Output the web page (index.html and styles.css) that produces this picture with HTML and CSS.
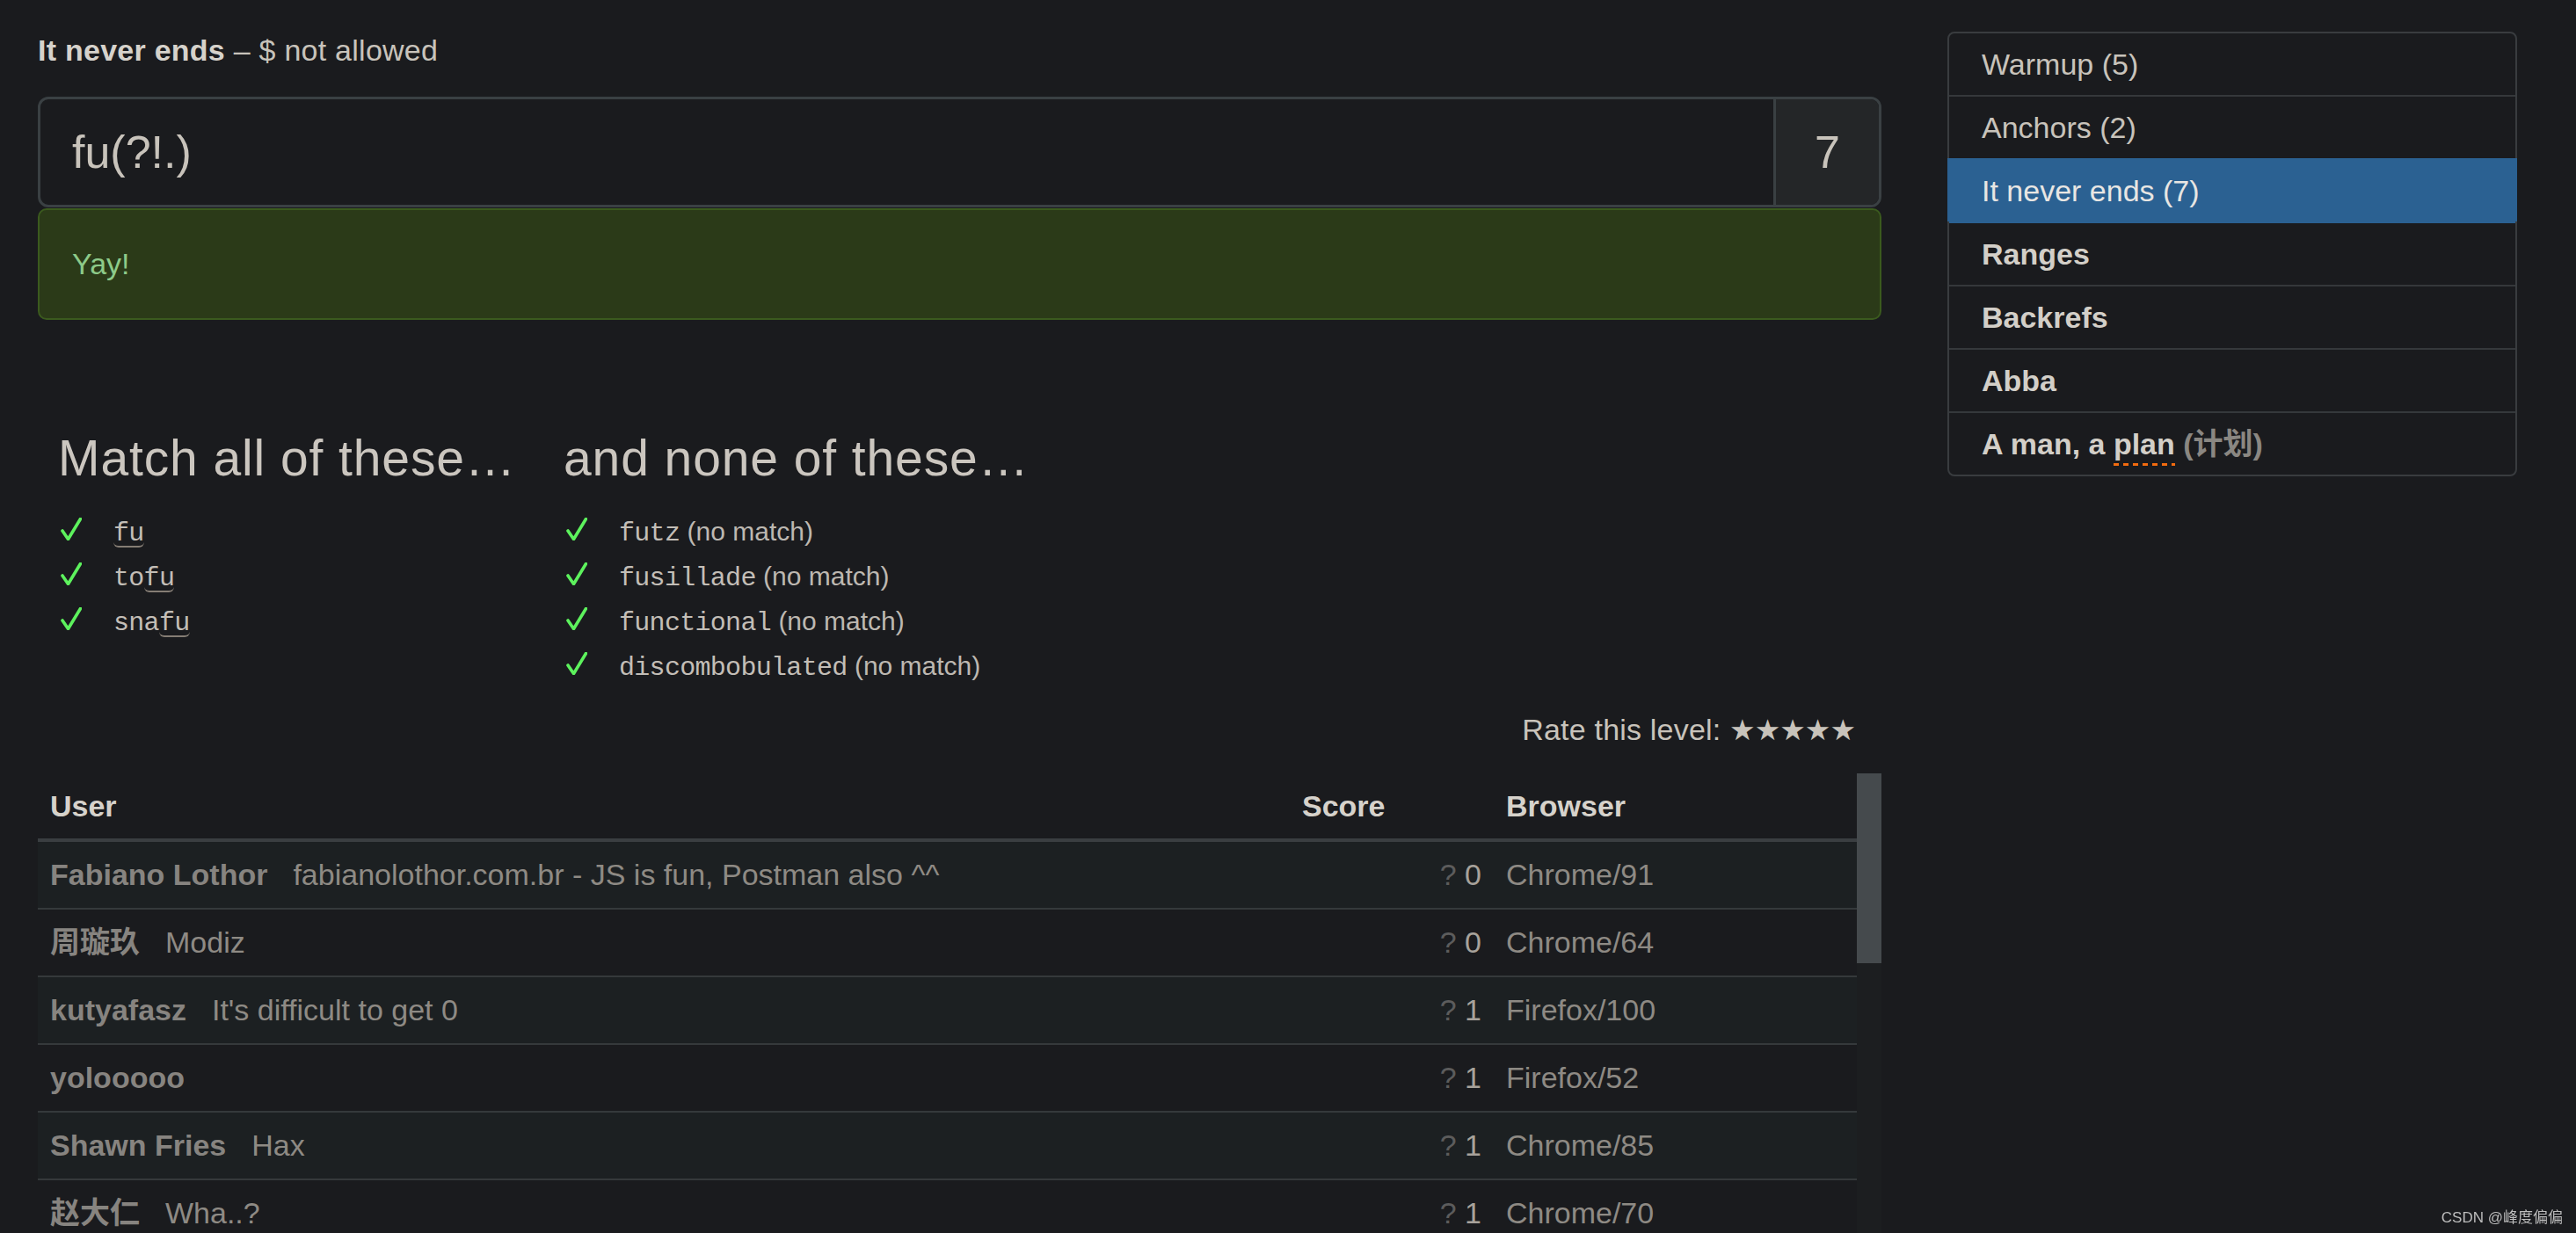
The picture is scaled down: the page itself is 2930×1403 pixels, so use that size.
FILE: index.html
```html
<!DOCTYPE html>
<html lang="en">
<head>
<meta charset="utf-8">
<title>Regex Golf – It never ends</title>
<link rel="stylesheet" href="styles.css">
</head>
<body>
<div class="page">
  <main class="main">
    <h1 class="title"><b>It never ends</b> – $ not allowed</h1>
    <div class="input-group">
      <div class="regex">fu(?!.)</div>
      <div class="count">7</div>
    </div>
    <div class="alert">Yay!</div>

    <div class="lists">
      <div class="col col-match">
        <h2>Match all of these…</h2>
        <ul class="words">
          <li><span class="check"><svg viewBox="0 0 24 26" width="24" height="26"><path d="M2 15 L8.5 24.5 L22.5 1.5" fill="none" stroke="#5df25d" stroke-width="3.6" stroke-linecap="round" stroke-linejoin="round"/></svg></span><code><span class="hit">fu</span></code></li>
          <li><span class="check"><svg viewBox="0 0 24 26" width="24" height="26"><path d="M2 15 L8.5 24.5 L22.5 1.5" fill="none" stroke="#5df25d" stroke-width="3.6" stroke-linecap="round" stroke-linejoin="round"/></svg></span><code>to<span class="hit">fu</span></code></li>
          <li><span class="check"><svg viewBox="0 0 24 26" width="24" height="26"><path d="M2 15 L8.5 24.5 L22.5 1.5" fill="none" stroke="#5df25d" stroke-width="3.6" stroke-linecap="round" stroke-linejoin="round"/></svg></span><code>sna<span class="hit">fu</span></code></li>
        </ul>
      </div>
      <div class="col col-none">
        <h2>and none of these…</h2>
        <ul class="words">
          <li><span class="check"><svg viewBox="0 0 24 26" width="24" height="26"><path d="M2 15 L8.5 24.5 L22.5 1.5" fill="none" stroke="#5df25d" stroke-width="3.6" stroke-linecap="round" stroke-linejoin="round"/></svg></span><code>futz</code> <span class="nomatch">(no match)</span></li>
          <li><span class="check"><svg viewBox="0 0 24 26" width="24" height="26"><path d="M2 15 L8.5 24.5 L22.5 1.5" fill="none" stroke="#5df25d" stroke-width="3.6" stroke-linecap="round" stroke-linejoin="round"/></svg></span><code>fusillade</code> <span class="nomatch">(no match)</span></li>
          <li><span class="check"><svg viewBox="0 0 24 26" width="24" height="26"><path d="M2 15 L8.5 24.5 L22.5 1.5" fill="none" stroke="#5df25d" stroke-width="3.6" stroke-linecap="round" stroke-linejoin="round"/></svg></span><code>functional</code> <span class="nomatch">(no match)</span></li>
          <li><span class="check"><svg viewBox="0 0 24 26" width="24" height="26"><path d="M2 15 L8.5 24.5 L22.5 1.5" fill="none" stroke="#5df25d" stroke-width="3.6" stroke-linecap="round" stroke-linejoin="round"/></svg></span><code>discombobulated</code> <span class="nomatch">(no match)</span></li>
        </ul>
      </div>
    </div>

    <div class="rate">Rate this level: <span class="stars">★★★★★</span></div>

    <div class="scores">
      <div class="board-wrap">
        <table class="board">
          <colgroup>
            <col class="c-user">
            <col class="c-score">
            <col class="c-browser">
          </colgroup>
          <thead>
            <tr><th>User</th><th>Score</th><th>Browser</th></tr>
          </thead>
          <tbody>
            <tr><td><b class="name">Fabiano Lothor</b><span class="comment">fabianolothor.com.br - JS is fun, Postman also ^^</span></td><td class="score"><span class="q">?</span> 0</td><td class="browser">Chrome/91</td></tr>
            <tr><td><b class="name">周璇玖</b><span class="comment">Modiz</span></td><td class="score"><span class="q">?</span> 0</td><td class="browser">Chrome/64</td></tr>
            <tr><td><b class="name">kutyafasz</b><span class="comment">It's difficult to get 0</span></td><td class="score"><span class="q">?</span> 1</td><td class="browser">Firefox/100</td></tr>
            <tr><td><b class="name">yolooooo</b></td><td class="score"><span class="q">?</span> 1</td><td class="browser">Firefox/52</td></tr>
            <tr><td><b class="name">Shawn Fries</b><span class="comment">Hax</span></td><td class="score"><span class="q">?</span> 1</td><td class="browser">Chrome/85</td></tr>
            <tr><td><b class="name">赵大仁</b><span class="comment">Wha..?</span></td><td class="score"><span class="q">?</span> 1</td><td class="browser">Chrome/70</td></tr>
          </tbody>
        </table>
      </div>
      <div class="scrollbar"><div class="thumb"></div></div>
    </div>
  </main>

  <aside class="sidebar">
    <ul class="levels">
      <li>Warmup (5)</li>
      <li>Anchors (2)</li>
      <li class="active">It never ends (7)</li>
      <li class="locked">Ranges</li>
      <li class="locked">Backrefs</li>
      <li class="locked">Abba</li>
      <li class="locked">A man, a <span class="typo">plan</span> <span class="cn">(计划)</span></li>
    </ul>
  </aside>
</div>
<div class="watermark">CSDN @峰度偏偏</div>
</body>
</html>
```

FILE: styles.css
```css
html, body {
  margin: 0;
  height: 100%;
  overflow: hidden;
  background: #1a1b1e;
}

body {
  font-family: "Liberation Sans", Arial, "Noto Sans CJK SC", sans-serif;
  color: #c8c3bb;
}

.page {
  display: flex;
  gap: 75px;
  padding: 36px 67px 0 43px;
}

.main {
  width: 2097px;
  flex: none;
}

.sidebar {
  width: 648px;
  flex: none;
}

/* title */
.title {
  margin: 1px 0 32px;
  font-size: 34px;
  font-weight: normal;
  line-height: 41px;
  letter-spacing: 0.25px;
  color: #c8c3bb;
}

.title b {
  color: #d6d2cb;
}

/* regex input */
.input-group {
  display: flex;
  height: 126px;
  box-sizing: border-box;
  border: 3px solid #3a4043;
  border-radius: 12px;
  overflow: hidden;
}

.regex {
  flex: 1;
  display: flex;
  align-items: center;
  padding-left: 36px;
  font-size: 52px;
  color: #c8c3bb;
}

.count {
  width: 120px;
  box-sizing: border-box;
  display: flex;
  align-items: center;
  justify-content: center;
  background: #242628;
  border-left: 3px solid #3a4043;
  font-size: 52px;
  color: #c8c3bb;
}

/* alert */
.alert {
  margin-top: 1px;
  height: 127px;
  box-sizing: border-box;
  display: flex;
  align-items: center;
  padding-left: 37px;
  border: 2px solid #3b5a1e;
  border-radius: 10px;
  background: #2b3a18;
  color: #8dca89;
  font-size: 34px;
}

/* match lists */
.lists {
  display: flex;
  margin-top: 126px;
  padding-left: 23px;
}

.col-match {
  width: 575px;
}

.lists h2 {
  margin: 0 0 27px;
  font-size: 57px;
  font-weight: normal;
  line-height: 62px;
  letter-spacing: 0.9px;
  color: #cbc6bf;
  white-space: nowrap;
}

.words {
  list-style: none;
  margin: 0;
  padding: 0;
}

.words li {
  height: 51px;
  font-size: 30px;
  line-height: 51px;
  color: #c0bbb4;
  white-space: nowrap;
}

.check {
  display: inline-block;
  width: 63px;
}

.check svg {
  display: inline-block;
  margin-left: 3px;
  vertical-align: baseline;
}

.words code {
  font-family: "Liberation Mono", "DejaVu Sans Mono", monospace;
  font-size: 30px;
  line-height: 30px;
  letter-spacing: -0.7px;
  color: #c3beb7;
}

.hit {
  display: inline-block;
  line-height: 28px;
  border-bottom: 2px solid #857d74;
  border-radius: 0 0 6px 6px;
}

.nomatch {
  color: #bdb8b1;
}

/* rating */
.rate {
  margin-top: 27px;
  padding-right: 30px;
  text-align: right;
  font-size: 34px;
  line-height: 40px;
  letter-spacing: 0.2px;
  color: #c8c3bb;
}

.stars {
  font-family: "DejaVu Sans", sans-serif;
  font-size: 33px;
  line-height: 30px;
  letter-spacing: -1px;
  color: #c8c3bb;
}

/* leaderboard */
.scores {
  display: flex;
  margin-top: 30px;
  height: 600px;
  overflow: hidden;
}

.board-wrap {
  flex: 1;
  min-width: 0;
}

.scrollbar {
  width: 28px;
  flex: none;
  background: #1c1e20;
}

.thumb {
  height: 216px;
  background: #454a4d;
}

.board {
  width: 100%;
  table-layout: fixed;
  border-collapse: separate;
  border-spacing: 0;
  font-size: 34px;
}

.c-user { width: 1424px; }
.c-score { width: 232px; }
.c-browser { width: 414px; }

.board th {
  padding: 0 14px;
  line-height: 74px;
  text-align: left;
  font-weight: bold;
  color: #d6d2cb;
  border-bottom: 4px solid #3a3e41;
}

.board td {
  padding: 0 14px;
  line-height: 75px;
  color: #8e8a84;
  border-bottom: 2px solid #35393b;
  white-space: nowrap;
  overflow: hidden;
}

.board tbody tr:nth-child(odd) td {
  background: #1c2022;
}

.name {
  color: #878480;
}

.comment {
  margin-left: 29px;
  color: #8e8a84;
}

.board td.score {
  text-align: right;
  color: #a7a29b;
}

.q {
  color: #5c5c5c;
}

.browser {
  color: #8e8a84;
}

/* level list */
.levels {
  list-style: none;
  margin: 0;
  padding: 0;
  border: 2px solid #393c3f;
  border-radius: 8px;
}

.levels li {
  padding-left: 37px;
  font-size: 34px;
  line-height: 70px;
  color: #c8c3bb;
  border-top: 2px solid #35383b;
  white-space: nowrap;
}

.levels li:first-child {
  border-top: none;
}

.levels li.active {
  margin: 0 -2px;
  padding-left: 39px;
  background: #2b6192;
  border-top-color: #2b6192;
  color: #e8e6e3;
}

.levels li.active + li {
  border-top-color: #2b6192;
}

.levels li.locked {
  font-weight: bold;
  color: #d3cfc8;
}

.typo {
  padding-bottom: 6px;
  background-image: repeating-linear-gradient(90deg, #f26b0f 0 6px, transparent 6px 11px);
  background-size: 100% 3px;
  background-position: 0 100%;
  background-repeat: no-repeat;
}

.cn {
  color: #8a8782;
}

/* watermark */
.watermark {
  position: fixed;
  right: 15px;
  bottom: 7px;
  font-size: 17px;
  color: #bdbdbd;
  font-family: "Liberation Sans", "Noto Sans CJK SC", sans-serif;
}
```
